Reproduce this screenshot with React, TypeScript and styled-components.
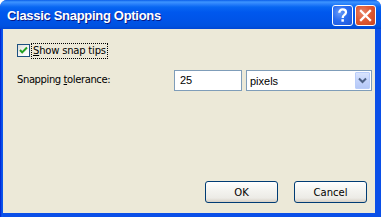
import styled, { createGlobalStyle } from 'styled-components'

const GlobalStyle = createGlobalStyle`
  html, body {
    margin: 0;
    padding: 0;
    background: #ffffff;
  }
  body {
    font-family: Tahoma, "DejaVu Sans", "Liberation Sans", sans-serif;
  }
`

const App: React.FC = () => {
  return (
    <>
      <GlobalStyle />
      <Window>
        <TitleBar>
          <Title>Classic Snapping Options</Title>
          <CaptionButtons>
            <CaptionButton variant="help" aria-label="Help">
              <svg width="21" height="21" viewBox="0 0 21 21">
                <path
                  d="M7.3 7.8c0-2.1 1.5-3.4 3.4-3.4s3.3 1.2 3.3 2.9c0 1.5-.9 2.1-1.9 2.8-.9.6-1.3 1.1-1.3 2.2v.7"
                  fill="none"
                  stroke="#fff"
                  strokeWidth="2.3"
                />
                <rect x="9.4" y="14.2" width="2.5" height="2.5" fill="#fff" />
              </svg>
            </CaptionButton>
            <CaptionButton variant="close" aria-label="Close">
              <svg width="21" height="21" viewBox="0 0 21 21">
                <path d="M6 6l9 9M15 6l-9 9" stroke="#fff" strokeWidth="2.3" strokeLinecap="square" />
              </svg>
            </CaptionButton>
          </CaptionButtons>
        </TitleBar>
        <Body>
          <CheckRow>
            <CheckBox>
              <svg width="11" height="11" viewBox="0 0 11 11">
                <path d="M2 5l2.2 2.4L9 2.5" fill="none" stroke="#21a121" strokeWidth="2" />
              </svg>
            </CheckBox>
            <FocusLabel>
              <u>S</u>how snap tips
            </FocusLabel>
          </CheckRow>
          <FieldRow>
            <FieldLabel>
              Snapping <u>t</u>olerance:
            </FieldLabel>
            <TextBox>25</TextBox>
            <Select>
              <span>pixels</span>
              <DropButton>
                <svg width="9" height="7" viewBox="0 0 9 7">
                  <path d="M1 1.5l3.5 3.5L8 1.5" fill="none" stroke="#4d6185" strokeWidth="2" />
                </svg>
              </DropButton>
            </Select>
          </FieldRow>
          <Footer>
            <PushButton>OK</PushButton>
            <PushButton>Cancel</PushButton>
          </Footer>
        </Body>
      </Window>
    </>
  )
}

export default App

const Window = styled.div`
  width: 381px;
  height: 217px;
  box-sizing: border-box;
  display: flex;
  flex-direction: column;
  background: linear-gradient(to right, #0019cf 0, #0b5cf0 2px, #0a4fe8 3px);
  border-radius: 7px 7px 0 0;
  overflow: hidden;
`

const TitleBar = styled.div`
  height: 29px;
  flex: none;
  display: flex;
  align-items: center;
  justify-content: space-between;
  padding: 0 5px 0 7px;
  background: linear-gradient(
    to bottom,
    #0a5ee9 0,
    #3d95ff 2px,
    #2a81fb 4px,
    #0867f2 7px,
    #0058ee 12px,
    #0054e8 20px,
    #0052e0 26px,
    #0046d4 29px
  );
`

const Title = styled.span`
  color: #ffffff;
  font-family: "Liberation Sans", Arial, sans-serif;
  font-weight: bold;
  font-size: 13px;
  letter-spacing: -0.3px;
  text-shadow: 1px 1px 0 #0a1883;
  padding-top: 1px;
`

const CaptionButtons = styled.div`
  display: flex;
  gap: 2px;
  padding-top: 1px;
`

const CaptionButton = styled.div<{ variant: 'help' | 'close' }>`
  width: 21px;
  height: 21px;
  box-sizing: border-box;
  border: 1px solid #ffffff;
  border-radius: 3px;
  display: flex;
  align-items: center;
  justify-content: center;
  background: ${({ variant }) =>
    variant === 'close'
      ? 'radial-gradient(circle at 35% 35%, #e8876c 0, #e05a34 45%, #c9431f 100%)'
      : 'radial-gradient(circle at 35% 35%, #6a9cf8 0, #2a6cf0 45%, #1d55d8 100%)'};
  svg {
    margin: -1px;
  }
`

const Body = styled.div`
  flex: 1;
  display: flex;
  flex-direction: column;
  margin: 0 6px 4px 3px;
  padding: 15px 8px 10px 14px;
  background: #ece9d8;
  font-family: "DejaVu Sans", Tahoma, sans-serif;
  font-size: 10px;
  color: #000000;
`

const CheckRow = styled.div`
  display: flex;
  align-items: center;
  height: 13px;
  gap: 1px;
`

const CheckBox = styled.div`
  width: 13px;
  height: 13px;
  box-sizing: border-box;
  border: 1px solid #1c5180;
  background: linear-gradient(135deg, #dcdcd7 0, #f4f4f2 50%, #ffffff 100%);
  display: flex;
  align-items: center;
  justify-content: center;
`

const FocusLabel = styled.span`
  border: 1px dotted #000000;
  padding: 1px 1px;
  line-height: 12px;
  letter-spacing: -0.2px;
`

const FieldRow = styled.div`
  display: grid;
  grid-template-columns: 153px 68px 126px;
  column-gap: 4px;
  align-items: center;
  margin-top: 13px;
  height: 21px;
`

const FieldLabel = styled.span`
  letter-spacing: -0.4px;
  margin-top: -3px;
`

const TextBox = styled.div`
  height: 21px;
  box-sizing: border-box;
  border: 1px solid #7f9db9;
  background: #ffffff;
  padding: 3px 0 0 5px;
  font-size: 11px;
  font-family: "Liberation Sans", Arial, sans-serif;
`

const Select = styled.div`
  height: 21px;
  box-sizing: border-box;
  border: 1px solid #7f9db9;
  background: #ffffff;
  display: flex;
  align-items: center;
  justify-content: space-between;
  padding: 1px 1px 1px 3px;
  font-size: 11px;
  font-family: "Liberation Sans", Arial, sans-serif;
  span {
    padding-top: 1px;
  }
`

const DropButton = styled.div`
  width: 15px;
  height: 17px;
  box-sizing: border-box;
  border: 1px solid #b9cdfa;
  border-radius: 1px;
  background: linear-gradient(to bottom, #d9e4fd 0, #c4d4fb 50%, #b5c8f7 100%);
  display: flex;
  align-items: center;
  justify-content: center;
`

const Footer = styled.div`
  margin-top: auto;
  display: flex;
  justify-content: flex-end;
  gap: 16px;
`

const PushButton = styled.div`
  width: 73px;
  height: 22px;
  box-sizing: border-box;
  border: 1px solid #003c74;
  border-radius: 3px;
  background: linear-gradient(to bottom, #ffffff 0, #f4f4f0 40%, #ecebe6 80%, #d6d0c5 100%);
  display: flex;
  align-items: center;
  justify-content: center;
  font-size: 10px;
`
